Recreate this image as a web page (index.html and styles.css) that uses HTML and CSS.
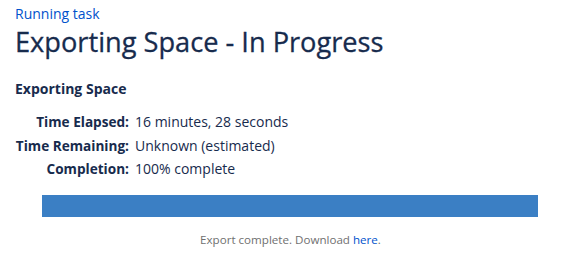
FILE: index.html
```html
<!DOCTYPE html>
<html lang="en">
<head>
<meta charset="utf-8">
<title>Exporting Space - In Progress</title>
<link rel="stylesheet" href="styles.css">
</head>
<body>
<div class="page">
  <a class="crumb" href="#">Running task</a>
  <h1 class="title">Exporting Space - In Progress</h1>
  <h2 class="subtitle">Exporting Space</h2>
  <dl class="details">
    <dt>Time Elapsed:</dt><dd>16 minutes, 28 seconds</dd>
    <dt>Time Remaining:</dt><dd>Unknown (estimated)</dd>
    <dt>Completion:</dt><dd>100% complete</dd>
  </dl>
  <div class="progress"><div class="progress-fill" style="width:100%"></div></div>
  <p class="status">Export complete. Download <a href="#">here</a>.</p>
</div>
</body>
</html>
```

FILE: styles.css
```css
html, body {
  margin: 0;
  padding: 0;
  background: #ffffff;
}
body {
  font-family: "Open Sans", "Noto Sans", sans-serif;
  color: #172b4d;
}
.page {
  padding: 4px 15px 0 15px;
}
.crumb {
  display: block;
  font-size: 14px;
  line-height: 20px;
  color: #0052cc;
  text-decoration: none;
}
.title {
  margin: 2px 0 0 0;
  font-size: 27.2px;
  line-height: 32px;
  font-weight: 400;
  color: #172b4d;
  -webkit-text-stroke: 0.3px #172b4d;
}
.subtitle {
  margin: 21px 0 0 0;
  font-size: 14px;
  line-height: 20px;
  font-weight: 700;
}
.details {
  margin: 13px 0 0 0;
  display: grid;
  grid-template-columns: 114px 1fr;
  column-gap: 6px;
  row-gap: 3.5px;
  font-size: 14px;
  line-height: 20px;
}
.details dt {
  display: flex;
  justify-content: flex-end;
  white-space: nowrap;
  font-weight: 700;
  font-size: 13.6px;
}
.details dd {
  margin: 0;
  white-space: nowrap;
}
.progress {
  margin: 16px 23px 0 27px;
  height: 22px;
  background: #e9e9e9;
}
.progress-fill {
  height: 100%;
  background: #3b7fc4;
}
.status {
  margin: 15px 0 0 0;
  text-align: center;
  font-size: 11.6px;
  line-height: 16px;
  color: #707070;
  padding-left: 35px;
  padding-right: 30px;
}
.status a {
  color: #0052cc;
  text-decoration: none;
}
```
